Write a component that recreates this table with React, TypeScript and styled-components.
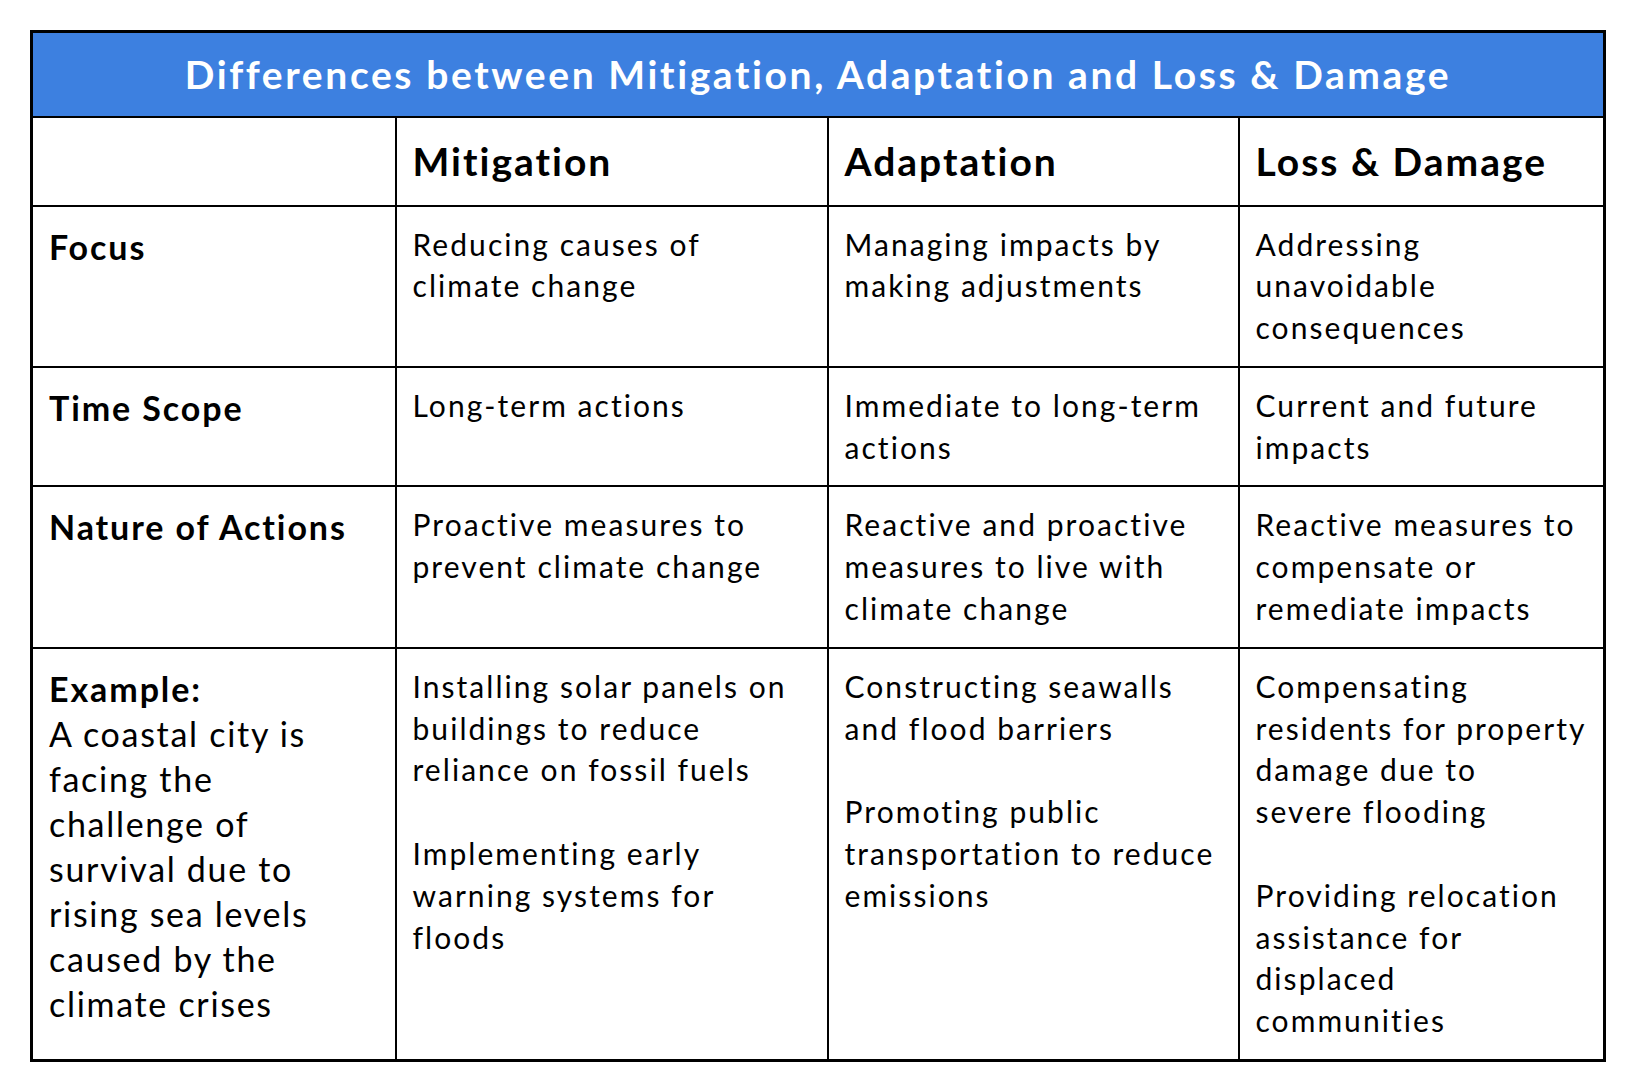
import styled, { createGlobalStyle } from "styled-components";

interface Row {
  label: string;
  note?: string;
  cells: string[];
}

const columns = ["Mitigation", "Adaptation", "Loss & Damage"];

const rows: Row[] = [
  {
    label: "Focus",
    cells: [
      "Reducing causes of\nclimate change",
      "Managing impacts by\nmaking adjustments",
      "Addressing\nunavoidable\nconsequences",
    ],
  },
  {
    label: "Time Scope",
    cells: [
      "Long-term actions",
      "Immediate to long-term\nactions",
      "Current and future\nimpacts",
    ],
  },
  {
    label: "Nature of Actions",
    cells: [
      "Proactive measures to\nprevent climate change",
      "Reactive and proactive\nmeasures to live with\nclimate change",
      "Reactive measures to\ncompensate or\nremediate impacts",
    ],
  },
  {
    label: "Example:",
    note: "A coastal city is\nfacing the\nchallenge of\nsurvival due to\nrising sea levels\ncaused by the\nclimate crises",
    cells: [
      "Installing solar panels on\nbuildings to reduce\nreliance on fossil fuels\n\nImplementing early\nwarning systems for\nfloods",
      "Constructing seawalls\nand flood barriers\n\nPromoting public\ntransportation to reduce\nemissions",
      "Compensating\nresidents for property\ndamage due to\nsevere flooding\n\nProviding relocation\nassistance for\ndisplaced\ncommunities",
    ],
  },
];

export default function App() {
  return (
    <>
      <GlobalStyle />
      <Page>
        <Table>
          <colgroup>
            <col style={{ width: 364 }} />
            <col style={{ width: 432 }} />
            <col style={{ width: 411 }} />
            <col style={{ width: 366 }} />
          </colgroup>
          <thead>
            <tr>
              <TitleCell colSpan={4}>
                Differences between Mitigation, Adaptation and Loss &amp; Damage
              </TitleCell>
            </tr>
            <tr>
              <HeadCell />
              {columns.map((col) => (
                <HeadCell key={col}>{col}</HeadCell>
              ))}
            </tr>
          </thead>
          <tbody>
            {rows.map((row) => (
              <tr key={row.label}>
                <LabelCell>
                  <Label>{row.label}</Label>
                  {row.note && <Note>{row.note}</Note>}
                </LabelCell>
                {row.cells.map((text, i) => (
                  <BodyCell key={i}>{text}</BodyCell>
                ))}
              </tr>
            ))}
          </tbody>
        </Table>
      </Page>
    </>
  );
}

const GlobalStyle = createGlobalStyle`
  body {
    margin: 0;
    background: #ffffff;
    font-family: Lato, "Open Sans", sans-serif;
    color: #000000;
  }
`;

const Page = styled.div`
  padding: 30px 0 0 30px;
`;

const Table = styled.table`
  width: 1573px;
  border-collapse: collapse;
  table-layout: fixed;
  border: 3px solid #000000;

  td,
  th {
    border: 2px solid #000000;
    box-sizing: border-box;
  }
`;

const TitleCell = styled.th`
  height: 85px;
  padding: 0;
  background: #3d80e0;
  color: #ffffff;
  font-size: 39px;
  font-weight: 700;
  line-height: 47px;
  letter-spacing: 2.6px;
  text-align: center;
  vertical-align: middle;
`;

const HeadCell = styled.th`
  height: 89px;
  padding: 0 16px;
  font-size: 39px;
  font-weight: 700;
  line-height: 47px;
  letter-spacing: 2px;
  text-align: left;
  vertical-align: middle;
`;

const LabelCell = styled.td`
  padding: 17px 16px;
  vertical-align: top;
`;

const Label = styled.div`
  font-size: 34px;
  font-weight: 700;
  line-height: 45px;
  letter-spacing: 1.9px;
`;

const Note = styled.div`
  font-size: 34px;
  line-height: 45px;
  letter-spacing: 1.7px;
  white-space: pre;
`;

const BodyCell = styled.td`
  padding: 17px 16px;
  font-size: 30px;
  line-height: 41.8px;
  letter-spacing: 2.05px;
  white-space: pre;
  vertical-align: top;
`;
